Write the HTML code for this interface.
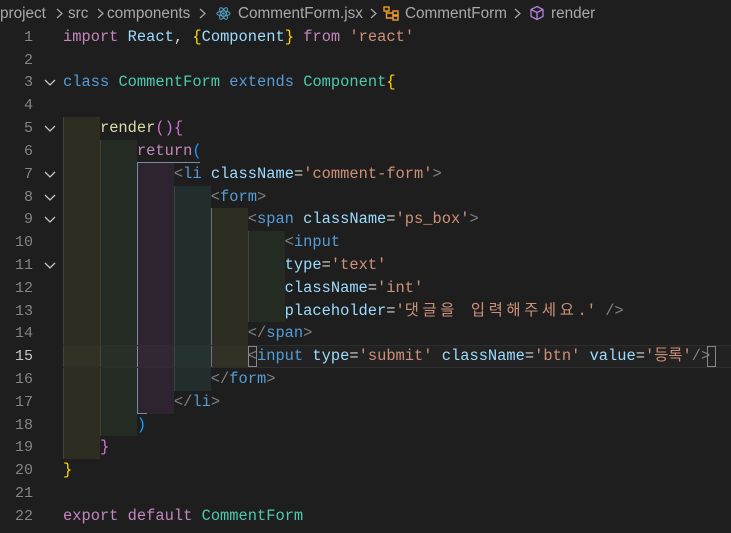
<!DOCTYPE html>
<html><head><meta charset="utf-8"><style>
*{margin:0;padding:0;box-sizing:border-box}
body{width:731px;height:533px;background:#1e1e1e;overflow:hidden;position:relative;font-family:"Liberation Mono","Noto Sans CJK KR",monospace}
.bc{position:absolute;top:0;left:0;height:26px;width:731px;font-family:"Liberation Sans",sans-serif;font-size:15.3px;color:#a9a9a9;line-height:27px;white-space:nowrap}
.bc span{position:absolute;top:0}
.bc svg.c{position:absolute;top:8px}
.blk{position:absolute}
.ln{position:absolute;left:0;width:33px;text-align:right;font-size:15px;color:#858585;height:23px;line-height:23px}
.code{position:absolute;left:63px;font-size:15.4px;line-height:23px;height:23px;white-space:pre;color:#d4d4d4}
.k{color:#c586c0}.b{color:#569cd6}.v{color:#9cdcfe}.t{color:#4ec9b0}.y{color:#ffd700}.s{color:#ce9178}.f{color:#dcdcaa}.p{color:#da70d6}.bl{color:#179fff}.g{color:#808080}
.kr{letter-spacing:3.6px}
</style></head><body>
<div class="bc">
<span style="left:0">project</span>
<svg class="c" style="left:56px" width="7" height="11" viewBox="0 0 7 11"><path d="M1 1l5 4.5L1 10" fill="none" stroke="#a9a9a9" stroke-width="1.2"/></svg>
<span style="left:68px">src</span>
<svg class="c" style="left:97px" width="7" height="11" viewBox="0 0 7 11"><path d="M1 1l5 4.5L1 10" fill="none" stroke="#a9a9a9" stroke-width="1.2"/></svg>
<span style="left:107px">components</span>
<svg class="c" style="left:199px" width="7" height="11" viewBox="0 0 7 11"><path d="M1 1l5 4.5L1 10" fill="none" stroke="#a9a9a9" stroke-width="1.2"/></svg>
<svg style="position:absolute;left:216px;top:6px" width="15" height="15" viewBox="0 0 16 16"><g fill="none" stroke="#519aba" stroke-width="1.1"><ellipse cx="8" cy="8" rx="7" ry="2.7"/><ellipse cx="8" cy="8" rx="7" ry="2.7" transform="rotate(60 8 8)"/><ellipse cx="8" cy="8" rx="7" ry="2.7" transform="rotate(120 8 8)"/></g><circle cx="8" cy="8" r="1.3" fill="#519aba"/></svg>
<span style="left:238px">CommentForm.jsx</span>
<svg class="c" style="left:370px" width="7" height="11" viewBox="0 0 7 11"><path d="M1 1l5 4.5L1 10" fill="none" stroke="#a9a9a9" stroke-width="1.2"/></svg>
<svg style="position:absolute;left:383px;top:5px" width="16" height="16" viewBox="0 0 16 16"><g fill="none" stroke="#ee9d28" stroke-width="1.4"><rect x="1" y="2" width="5" height="4"/><rect x="10" y="6" width="5" height="4"/><rect x="10" y="11" width="5" height="4"/><path d="M3.5 6v7h6.5M3.5 8h6.5"/></g></svg>
<span style="left:405px">CommentForm</span>
<svg class="c" style="left:514px" width="7" height="11" viewBox="0 0 7 11"><path d="M1 1l5 4.5L1 10" fill="none" stroke="#a9a9a9" stroke-width="1.2"/></svg>
<svg style="position:absolute;left:529px;top:5px" width="16" height="16" viewBox="0 0 16 16"><g fill="none" stroke="#b180d7" stroke-width="1.3"><path d="M8 1.5l6 3v7l-6 3-6-3v-7z"/><path d="M2 4.5l6 3 6-3M8 7.5v7"/></g></svg>
<span style="left:551px">render</span>
</div>

<div class="blk" style="left:63px;top:117px;width:37px;height:342px;background:#2d2d21;border-left:1px solid #404040"></div>
<div class="blk" style="left:100px;top:140px;width:37px;height:296px;background:#232b23;border-left:1px solid #404040"></div>
<div class="blk" style="left:137px;top:163px;width:37px;height:251px;background:#2d2430;border-left:1px solid #7a8ea0"></div>
<div class="blk" style="left:137px;top:162px;width:63px;height:1px;background:#7a8ea0"></div>
<div class="blk" style="left:137px;top:413px;width:10px;height:1px;background:#7a8ea0"></div>
<div class="blk" style="left:174px;top:186px;width:37px;height:205px;background:#222d2e;border-left:1px solid #404040"></div>
<div class="blk" style="left:211px;top:208px;width:37px;height:160px;background:#2d2d21;border-left:1px solid #707070"></div>
<div class="blk" style="left:248px;top:231px;width:37px;height:91px;background:#232b23;border-left:1px solid #404040"></div>
<div class="blk" style="left:63px;top:345px;width:668px;height:23px;border-top:1px solid #2e2e2e;border-bottom:1px solid #2e2e2e;background:rgba(255,255,255,0.02)"></div>
<div class="blk" style="left:248px;top:346px;width:9px;height:21px;border:1px solid #888"></div>
<div class="blk" style="left:707px;top:346px;width:9px;height:21px;border:1px solid #888"></div>

<div class="ln" style="top:26px">1</div><div class="ln" style="top:49px">2</div><div class="ln" style="top:71px">3</div><div class="ln" style="top:94px">4</div><div class="ln" style="top:117px">5</div><div class="ln" style="top:140px">6</div><div class="ln" style="top:163px">7</div><div class="ln" style="top:186px">8</div><div class="ln" style="top:208px">9</div><div class="ln" style="top:231px">10</div><div class="ln" style="top:254px">11</div><div class="ln" style="top:277px">12</div><div class="ln" style="top:300px">13</div><div class="ln" style="top:322px">14</div><div class="ln" style="top:345px;color:#c6c6c6">15</div><div class="ln" style="top:368px">16</div><div class="ln" style="top:391px">17</div><div class="ln" style="top:414px">18</div><div class="ln" style="top:436px">19</div><div class="ln" style="top:459px">20</div><div class="ln" style="top:482px">21</div><div class="ln" style="top:505px">22</div>

<svg style="position:absolute;left:0;top:0" width="63" height="533"><g fill="none" stroke="#c5c5c5" stroke-width="1.3">
<path d="M45 80l5 5 5-5"/><path d="M45 126l5 5 5-5"/><path d="M45 172l5 5 5-5"/><path d="M45 195l5 5 5-5"/><path d="M45 217l5 5 5-5"/><path d="M45 263l5 5 5-5"/></g></svg>

<div class="code" style="top:26px"><span class="k">import</span> <span class="v">React</span>, <span class="y">{</span><span class="v">Component</span><span class="y">}</span> <span class="k">from</span> <span class="s">'react'</span></div>
<div class="code" style="top:71px"><span class="b">class</span> <span class="t">CommentForm</span> <span class="b">extends</span> <span class="t">Component</span><span class="y">{</span></div>
<div class="code" style="top:117px">    <span class="f">render</span><span class="p">(){</span></div>
<div class="code" style="top:140px">        <span class="k">return</span><span class="bl">(</span></div>
<div class="code" style="top:163px">            <span class="g">&lt;</span><span class="b">li</span> <span class="v">className</span>=<span class="s">'comment-form'</span><span class="g">&gt;</span></div>
<div class="code" style="top:186px">                <span class="g">&lt;</span><span class="b">form</span><span class="g">&gt;</span></div>
<div class="code" style="top:208px">                    <span class="g">&lt;</span><span class="b">span</span> <span class="v">className</span>=<span class="s">'ps_box'</span><span class="g">&gt;</span></div>
<div class="code" style="top:231px">                        <span class="g">&lt;</span><span class="b">input</span></div>
<div class="code" style="top:254px">                        <span class="v">type</span>=<span class="s">'text'</span></div>
<div class="code" style="top:277px">                        <span class="v">className</span>=<span class="s">'int'</span></div>
<div class="code" style="top:300px">                        <span class="v">placeholder</span>=<span class="s">'<span class="kr">댓글을 입력해주세요</span>.'</span> <span class="g">/&gt;</span></div>
<div class="code" style="top:322px">                    <span class="g">&lt;/</span><span class="b">span</span><span class="g">&gt;</span></div>
<div class="code" style="top:345px">                    <span class="g">&lt;</span><span class="b">input</span> <span class="v">type</span>=<span class="s">'submit'</span> <span class="v">className</span>=<span class="s">'btn'</span> <span class="v">value</span>=<span class="s">'등록'</span><span class="g">/&gt;</span></div>
<div class="code" style="top:368px">                <span class="g">&lt;/</span><span class="b">form</span><span class="g">&gt;</span></div>
<div class="code" style="top:391px">            <span class="g">&lt;/</span><span class="b">li</span><span class="g">&gt;</span></div>
<div class="code" style="top:414px">        <span class="bl">)</span></div>
<div class="code" style="top:436px">    <span class="p">}</span></div>
<div class="code" style="top:459px"><span class="y">}</span></div>
<div class="code" style="top:505px"><span class="k">export</span> <span class="k">default</span> <span class="t">CommentForm</span></div>
</body></html>
